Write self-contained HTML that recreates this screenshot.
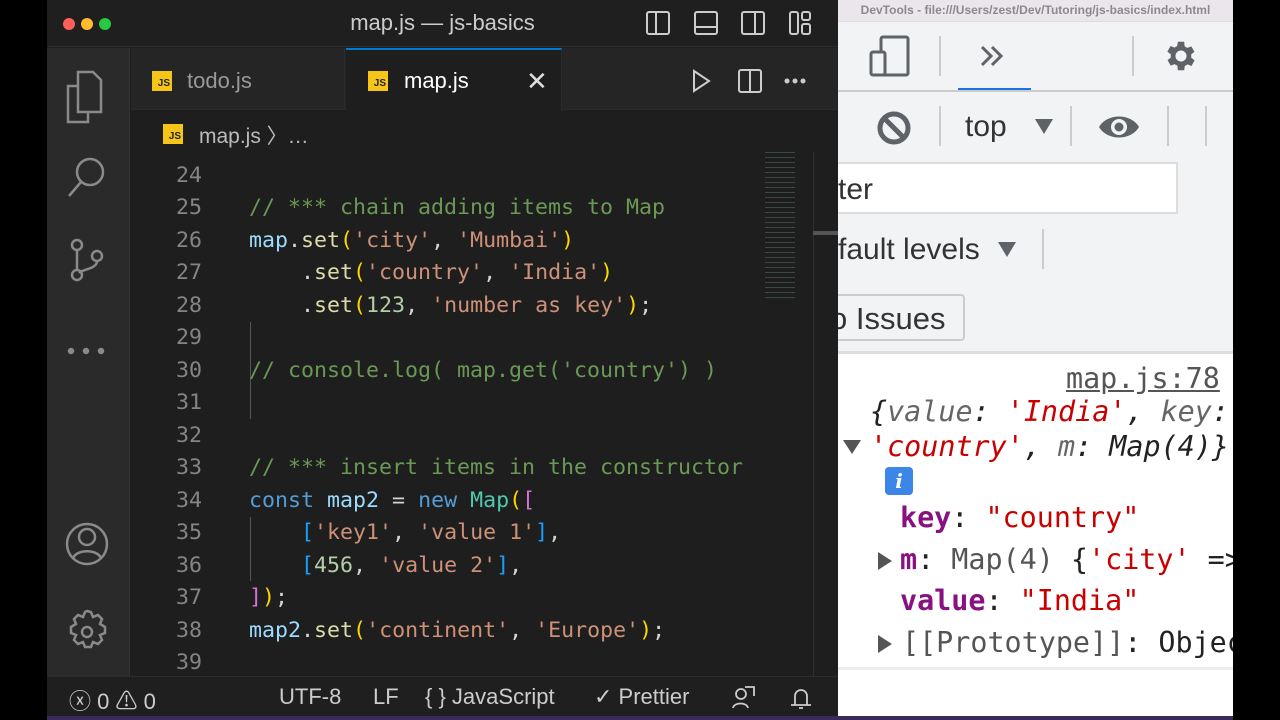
<!DOCTYPE html>
<html><head><meta charset="utf-8"><style>
*{margin:0;padding:0;box-sizing:border-box}
body{width:1280px;height:720px;background:#000;position:relative;overflow:hidden;font-family:"Liberation Sans",sans-serif}
.abs{position:absolute}
.vs{left:47px;top:0;width:791px;height:716px;background:#1e1e1e}
.mono{font-family:"DejaVu Sans Mono","Liberation Mono",monospace}
.code{font-size:21.6px;white-space:pre;line-height:32.47px}
.c{color:#6a9955}.v{color:#9cdcfe}.f{color:#dcdcaa}.s{color:#ce9178}.n{color:#b5cea8}.k{color:#569cd6}.t{color:#4ec9b0}.y{color:#ffd700}.p{color:#da70d6}.b{color:#179fff}.w{color:#d4d4d4}
.js{display:inline-block;width:20px;height:20px;background:#f5c518;color:#222;font-size:10px;font-weight:bold;text-align:right;padding:8px 2px 0 0;line-height:10px}
.dt{left:838px;top:0;width:395px;height:720px;background:#f1f3f4;overflow:hidden}
.sep{position:absolute;width:2px;background:#ccc}
.cs{font-size:28.4px;white-space:pre}
</style></head><body>
<div class="abs vs">
 <div class="abs" style="left:0;top:0;width:791px;height:47px;background:#1f1f1f;border-bottom:1px solid #2b2b2b"></div>
 <div class="abs" style="left:16px;top:18px;width:12px;height:12px;border-radius:6px;background:#fe5f57"></div>
 <div class="abs" style="left:34px;top:18px;width:12px;height:12px;border-radius:6px;background:#febc2e"></div>
 <div class="abs" style="left:52px;top:18px;width:12px;height:12px;border-radius:6px;background:#28c840"></div>
 <div class="abs" style="left:0;width:791px;top:10px;text-align:center;color:#ccc;font-size:22px">map.js — js-basics</div>
 <svg class="abs" style="left:598px;top:10px" width="180" height="28" fill="none" stroke="#ccc" stroke-width="2">
  <rect x="2" y="2" width="22" height="22" rx="2"/><line x1="11" y1="2" x2="11" y2="24"/>
  <rect x="50" y="2" width="22" height="22" rx="2"/><line x1="50" y1="17" x2="72" y2="17"/>
  <rect x="97" y="2" width="22" height="22" rx="2"/><line x1="110" y1="2" x2="110" y2="24"/>
  <rect x="145" y="2" width="8" height="22" rx="2"/><rect x="157" y="2" width="8" height="8" rx="2"/><rect x="157" y="14" width="8" height="10" rx="2"/>
 </svg>
 <div class="abs" style="left:0;top:48px;width:83px;height:628px;background:#2a2a2a;border-right:1px solid #333"></div>
 <svg class="abs" style="left:0;top:48px" width="83" height="628" fill="none" stroke="#8a8a8a" stroke-width="2.5">
  <path d="M31 38h-10v36h20v-10M31 24h15l8 8v32h-23z"/>
  <circle cx="43" cy="124" r="13"/><line x1="34" y1="134" x2="22" y2="148"/>
  <circle cx="30" cy="197" r="5"/><circle cx="30" cy="227" r="5"/><circle cx="50" cy="208" r="5"/><path d="M30 202v20M50 213c0 8-14 8-18 12"/>
  <circle cx="24" cy="303" r="2" fill="#8a8a8a"/><circle cx="39" cy="303" r="2" fill="#8a8a8a"/><circle cx="54" cy="303" r="2" fill="#8a8a8a"/>
  <circle cx="40" cy="496" r="20"/><circle cx="40" cy="489" r="8"/><path d="M26 510c4-9 24-9 28 0"/>
  <circle cx="40" cy="584" r="5"/><path d="M40 563l4 1 2 5 5-2 4 4-2 5 5 3v6l-5 2 2 5-4 4-5-2-2 5h-6l-2-5-5 2-4-4 2-5-5-2v-6l5-3-2-5 4-4 5 2 2-5z"/>
 </svg>
 <div class="abs" style="left:84px;top:48px;width:707px;height:62px;background:#252526;border-bottom:1px solid #2b2b2b"></div>
 <div class="abs" style="left:84px;top:48px;width:214px;height:62px;border-right:1px solid #2b2b2b"></div>
 <div class="abs" style="left:105px;top:71px"><span class="js">JS</span></div>
 <div class="abs" style="left:140px;top:68px;color:#999;font-size:22px">todo.js</div>
 <div class="abs" style="left:299px;top:48px;width:216px;height:63px;background:#1e1e1e;border-top:2px solid #0078d4;border-right:1px solid #2b2b2b"></div>
 <div class="abs" style="left:321px;top:71px"><span class="js">JS</span></div>
 <div class="abs" style="left:357px;top:68px;color:#fff;font-size:22px">map.js</div>
 <div class="abs" style="left:479px;top:66px;color:#ddd;font-size:26px">✕</div>
 <svg class="abs" style="left:640px;top:66px" width="130" height="30" fill="none" stroke="#ccc" stroke-width="2">
  <path d="M7 5l15 10-15 10z"/><rect x="52" y="4" width="22" height="22" rx="2"/><line x1="63" y1="4" x2="63" y2="26"/>
  <circle cx="100" cy="15" r="1.5" fill="#ccc"/><circle cx="108" cy="15" r="1.5" fill="#ccc"/><circle cx="116" cy="15" r="1.5" fill="#ccc"/>
 </svg>
 <div class="abs" style="left:116px;top:124px"><span class="js">JS</span></div>
 <div class="abs" style="left:152px;top:120px;color:#bbb;font-size:21px">map.js 〉…</div>
 <div class="abs mono code" style="left:95px;top:160px;width:60px;text-align:right;color:#858585">24
25
26
27
28
29
30
31
32
33
34
35
36
37
38
39</div>
 <div class="abs" style="left:203px;top:322px;width:1px;height:97px;background:#555"></div>
 <div class="abs" style="left:203px;top:517px;width:1px;height:64px;background:#555"></div>
 <div class="abs mono code w" style="left:202px;top:160px">
<span class="c">// *** chain adding items to Map</span>
<span class="v">map</span>.<span class="f">set</span><span class="y">(</span><span class="s">'city'</span>, <span class="s">'Mumbai'</span><span class="y">)</span>
    .<span class="f">set</span><span class="y">(</span><span class="s">'country'</span>, <span class="s">'India'</span><span class="y">)</span>
    .<span class="f">set</span><span class="y">(</span><span class="n">123</span>, <span class="s">'number as key'</span><span class="y">)</span>;

<span class="c">// console.log( map.get('country') )</span>


<span class="c">// *** insert items in the constructor</span>
<span class="k">const</span> <span class="v">map2</span> = <span class="k">new</span> <span class="t">Map</span><span class="y">(</span><span class="p">[</span>
    <span class="b">[</span><span class="s">'key1'</span>, <span class="s">'value 1'</span><span class="b">]</span>,
    <span class="b">[</span><span class="n">456</span>, <span class="s">'value 2'</span><span class="b">]</span>,
<span class="p">]</span><span class="y">)</span>;
<span class="v">map2</span>.<span class="f">set</span><span class="y">(</span><span class="s">'continent'</span>, <span class="s">'Europe'</span><span class="y">)</span>;
</div>
 <div class="abs" style="left:718px;top:150px;width:30px;height:150px;opacity:.45;background:repeating-linear-gradient(#1e1e1e 0 2px,#5a7a6a 2px 3px,#1e1e1e 3px 5px)"></div>
 <div class="abs" style="left:766px;top:152px;width:1px;height:524px;background:#2e2e2e"></div>
 <div class="abs" style="left:766px;top:231px;width:25px;height:4px;background:#555"></div>
 <div class="abs" style="left:0;top:676px;width:791px;height:40px;background:#1f1f1f;border-top:1px solid #2b2b2b;color:#ccc;font-size:22px">
  <span class="abs" style="left:22px;top:7px">ⓧ 0 ⚠ 0</span>
  <span class="abs" style="left:232px;top:7px">UTF-8</span>
  <span class="abs" style="left:326px;top:7px">LF</span>
  <span class="abs" style="left:378px;top:7px">{ } JavaScript</span>
  <span class="abs" style="left:547px;top:7px">✓ Prettier</span>
  <svg class="abs" style="left:684px;top:8px" width="90" height="26" fill="none" stroke="#ccc" stroke-width="1.8"><circle cx="10" cy="9" r="5"/><path d="M2 23c1-6 14-6 15 0M14 2h9v9"/><path d="M60 20h20M64 20v-9a6 6 0 0112 0v9M68 23h4"/></svg>
 </div>
</div>
<div class="abs" style="left:47px;top:716px;width:791px;height:4px;background:#3a2a5a"></div>
<div class="abs dt">
 <div class="abs" style="left:0;top:0;width:395px;height:22px;background:#ebe6eb;border-bottom:1px solid #ddd;color:#8a8a8a;font-size:12px;font-weight:bold;text-align:center;line-height:21px">DevTools - file:///Users/zest/Dev/Tutoring/js-basics/index.html</div>
 <svg class="abs" style="left:30px;top:34px" width="45" height="45" fill="none" stroke="#5f6368" stroke-width="3"><rect x="13" y="3" width="27" height="38" rx="2"/><rect x="3" y="18" width="14" height="23" rx="2" fill="#f1f3f4"/></svg>
 <div class="sep" style="left:101px;top:36px;height:40px"></div>
 <svg class="abs" style="left:140px;top:44px" width="30" height="24" fill="none" stroke="#5f6368" stroke-width="3"><path d="M4 3l9 9-9 9M14 3l9 9-9 9"/></svg>
 <div class="abs" style="left:120px;top:88px;width:73px;height:4px;background:#1a73e8"></div>
 <div class="sep" style="left:294px;top:36px;height:40px"></div>
 <svg class="abs" style="left:324px;top:37px" width="38" height="38" viewBox="0 0 24 24"><path fill="#5f6368" fill-rule="evenodd" d="M19.4 13a7.5 7.5 0 000-2l2.1-1.6-2-3.5-2.5 1a7 7 0 00-1.7-1L15 3h-4l-.4 2.7a7 7 0 00-1.7 1l-2.5-1-2 3.5L6.6 11a7.5 7.5 0 000 2l-2.1 1.6 2 3.5 2.5-1a7 7 0 001.7 1L11 21h4l.4-2.7a7 7 0 001.7-1l2.5 1 2-3.5zM13 15.5a3.5 3.5 0 110-7 3.5 3.5 0 010 7z" transform="translate(-1 0)"/></svg>
 <div class="abs" style="left:0;top:90px;width:395px;height:2px;background:#ccc"></div>
 <svg class="abs" style="left:38px;top:110px" width="36" height="36" fill="none" stroke="#5f6368" stroke-width="5"><circle cx="18" cy="18" r="14"/><line x1="8" y1="8" x2="28" y2="28"/></svg>
 <div class="sep" style="left:101px;top:106px;height:40px"></div>
 <div class="abs" style="left:127px;top:110px;color:#333;font-size:30px">top</div>
 <div class="abs" style="left:197px;top:119px;width:0;height:0;border-left:9px solid transparent;border-right:9px solid transparent;border-top:15px solid #5f6368"></div>
 <div class="sep" style="left:232px;top:106px;height:40px"></div>
 <svg class="abs" style="left:259px;top:110px" width="44" height="34"><path d="M2 17C10 3 34 3 42 17 34 31 10 31 2 17z" fill="#5f6368"/><circle cx="22" cy="17" r="8" fill="#f1f3f4"/><circle cx="22" cy="17" r="4.5" fill="#5f6368"/></svg>
 <div class="sep" style="left:329px;top:106px;height:40px"></div>
 <div class="sep" style="left:367px;top:106px;height:40px"></div>
 <div class="abs" style="left:-10px;top:162px;width:350px;height:52px;background:#fff;border:2px solid #ddd"></div>
 <div class="abs" style="left:0;top:173px;color:#333;font-size:30px">ter</div>
 <div class="abs" style="left:0;top:233px;color:#333;font-size:30px">fault levels</div>
 <div class="abs" style="left:160px;top:242px;width:0;height:0;border-left:9px solid transparent;border-right:9px solid transparent;border-top:15px solid #5f6368"></div>
 <div class="sep" style="left:204px;top:229px;height:40px"></div>
 <div class="abs" style="left:-20px;top:294px;width:147px;height:47px;border:2px solid #ccc;border-radius:4px;background:#f1f3f4"></div>
 <div class="abs" style="left:-8px;top:301px;color:#333;font-size:31px">o Issues</div>
 <div class="abs" style="left:0;top:351px;width:395px;height:369px;background:#fff;border-top:3px solid #ddd"></div>
 <div class="abs mono cs" style="left:228px;top:362px;color:#555;text-decoration:underline">map.js:78</div>
 <div class="abs mono cs" style="left:32px;top:395px;font-style:italic;color:#222">{<span style="color:#666">value</span>: <span style="color:#c80000">'India'</span>, <span style="color:#666">key</span>:</div>
 <div class="abs mono cs" style="left:32px;top:430px;font-style:italic;color:#222"><span style="color:#c80000">'country'</span>, <span style="color:#666">m</span>: Map(4)}</div>
 <div class="abs" style="left:5px;top:440px;width:0;height:0;border-left:9px solid transparent;border-right:9px solid transparent;border-top:14px solid #555"></div>
 <div class="abs" style="left:47px;top:467px;width:28px;height:28px;background:#3b86e6;border-radius:4px;color:#fff;font-style:italic;font-weight:bold;text-align:center;font-size:20px;line-height:28px;font-family:'DejaVu Serif',serif">i</div>
 <div class="abs mono cs" style="left:62px;top:501px;color:#222"><b style="color:#881280">key</b>: <span style="color:#c80000">"country"</span></div>
 <div class="abs" style="left:40px;top:552px;width:0;height:0;border-top:9px solid transparent;border-bottom:9px solid transparent;border-left:14px solid #555"></div>
 <div class="abs mono cs" style="left:62px;top:543px;color:#222"><b style="color:#881280">m</b>: <span style="color:#555">Map(4)</span> {<span style="color:#c80000">'city'</span> =&gt;</div>
 <div class="abs mono cs" style="left:62px;top:584px;color:#222"><b style="color:#881280">value</b>: <span style="color:#c80000">"India"</span></div>
 <div class="abs" style="left:40px;top:635px;width:0;height:0;border-top:9px solid transparent;border-bottom:9px solid transparent;border-left:14px solid #555"></div>
 <div class="abs mono cs" style="left:64px;top:626px;color:#222"><span style="color:#555">[[Prototype]]</span>: Object</div>
 <div class="abs" style="left:0;top:667px;width:395px;height:3px;background:#eee"></div>
 <div class="abs" style="left:0;top:716px;width:395px;height:4px;background:#3a2a5a"></div>
</div>
<div class="abs" style="left:1233px;top:0;width:47px;height:720px;background:#000"></div>
</body></html>
